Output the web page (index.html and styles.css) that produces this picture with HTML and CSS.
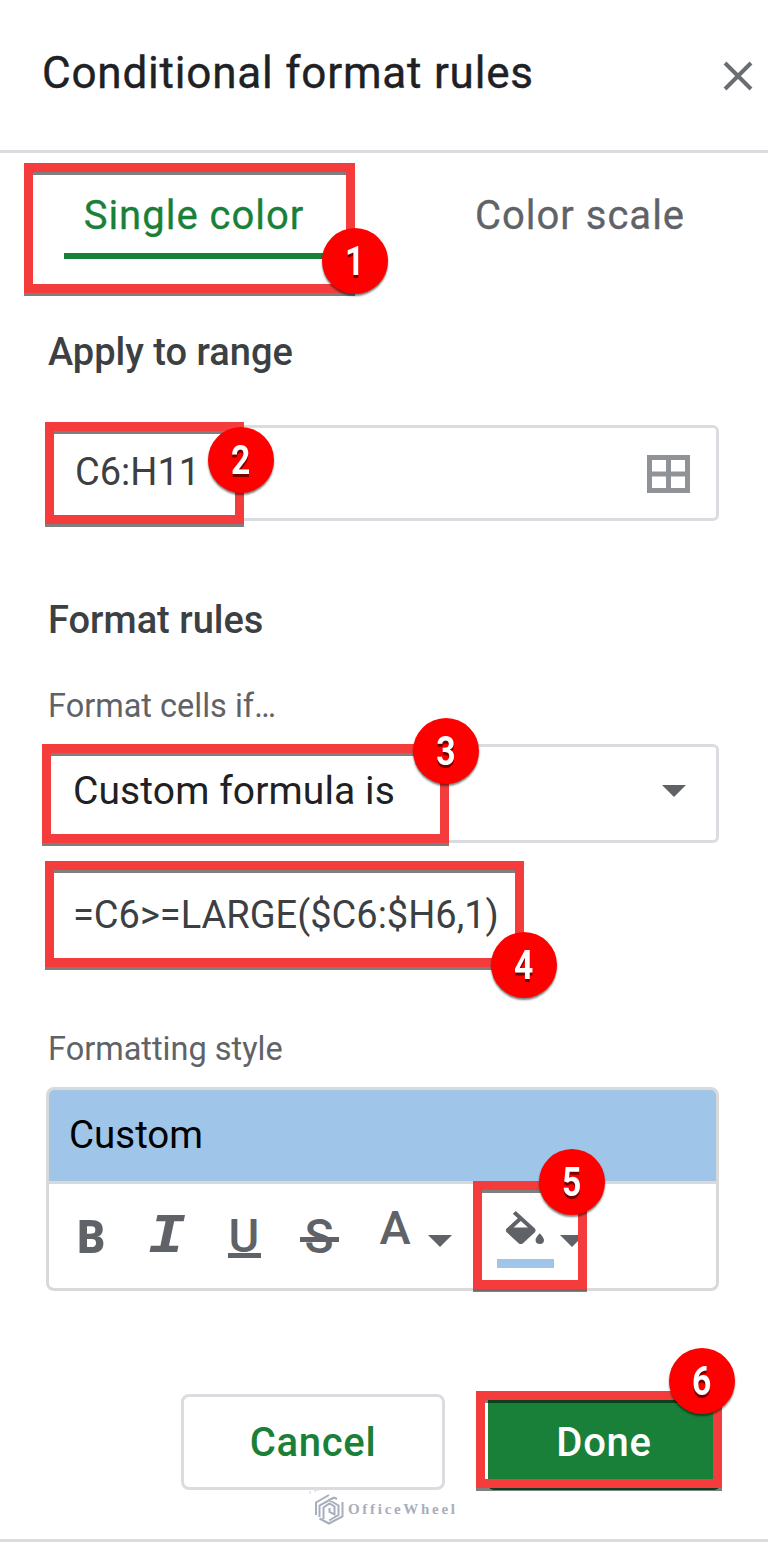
FILE: index.html
```html
<!DOCTYPE html>
<html lang="en">
<head>
    <meta charset="UTF-8">
    <meta name="viewport" content="width=device-width, initial-scale=1.0">
    <title>Conditional format rules</title>
    <link rel="stylesheet" href="styles.css">
</head>
<body>

<div class="header">
    <span class="title">Conditional format rules</span>
    <svg class="close" viewBox="0 0 30 30"><path d="M2 2L28 28M28 2L2 28" fill="none" stroke="#6a6e73" stroke-width="4"/></svg>
</div>

<div class="tabs">
    <div class="tab active"><span class="t-single">Single color</span></div>
    <div class="tab"><span class="t-scale">Color scale</span></div>
    <div class="mark mark-1"></div>
    <div class="badge badge-1"><span>1</span></div>
</div>

<div class="content">
    <div class="section-title apply">Apply to range</div>
    <div class="field range">
        <span class="t-range">C6:H11</span>
        <svg class="grid-icon" viewBox="0 0 43 38"><path d="M2.5 2.5h38v33h-38zM21.5 2v34M2 19h39" fill="none" stroke="#8f9397" stroke-width="5"/></svg>
        <div class="mark mark-2"></div>
        <div class="badge badge-2"><span>2</span></div>
    </div>

    <div class="section-title rules">Format rules</div>
    <div class="label cells-if">Format cells if…</div>
    <div class="field select">
        <span class="t-select">Custom formula is</span>
        <svg class="arrow" viewBox="0 0 24 12"><path d="M0 0h24L12 12z" fill="#5f6368"/></svg>
        <div class="mark mark-3"></div>
        <div class="badge badge-3"><span>3</span></div>
    </div>
    <div class="formula">
        <span class="t-formula">=C6&gt;=LARGE($C6:$H6,1)</span>
        <div class="mark mark-4"></div>
        <div class="badge badge-4"><span>4</span></div>
    </div>

    <div class="label style-label">Formatting style</div>
    <div class="style-box">
        <div class="preview"><span class="t-custom">Custom</span></div>
        <div class="toolbar">
            <div class="tool"><span class="bold">B</span></div>
            <div class="tool"><span class="italic">I</span></div>
            <div class="tool"><span class="underline">U</span></div>
            <div class="tool"><span class="strike">S</span></div>
            <div class="tool"><span class="color">A</span></div>
            <svg class="arrow small" viewBox="0 0 24 12"><path d="M0 0h24L12 12z" fill="#5f6368"/></svg>
            <div class="fill">
                <svg class="bucket" viewBox="3 0 18 17" preserveAspectRatio="none"><path d="M16.56 8.94L7.62 0 6.21 1.41l2.38 2.38-5.15 5.15a1.49 1.49 0 0 0 0 2.12l5.5 5.5c.29.29.68.44 1.06.44s.77-.15 1.06-.44l5.5-5.5c.59-.58.59-1.53 0-2.12zM6.600 8.500L10 5.21 13.400 8.500zM19 11.5s-2 2.17-2 3.5a2 2 0 0 0 4 0c0-1.33-2-3.5-2-3.5z" fill="#5f6368"/></svg>
                <div class="swatch"></div>
            </div>
            <svg class="arrow small" viewBox="0 0 24 12"><path d="M0 0h24L12 12z" fill="#5f6368"/></svg>
        </div>
        <div class="mark mark-5"></div>
        <div class="badge badge-5"><span>5</span></div>
    </div>
</div>

<div class="buttons">
    <button class="btn cancel"><span class="t-cancel">Cancel</span></button>
    <button class="btn done"><span class="t-done">Done</span></button>
    <div class="mark mark-6"></div>
    <div class="badge badge-6"><span>6</span></div>
</div>

<div class="brand">
    <svg class="brand-logo" viewBox="-5 -4 35 36"><path d="M2 22V9.500L15 2M5.500 24V12.500L20 4.500M9.500 26V14.500l6-4 5 3v8l-5-2.500v-4M20 4.500L23 6M16 7.500l8.500 5V22L15 27.500M28.500 9v14.500L15 30.500 5.500 25.500" fill="none" stroke="#a9aebc" stroke-width="2"/><path d="M-4-2v3M1-3h4M1-3v2" fill="none" stroke="#cdd1da" stroke-width="1"/></svg>
    <span class="t-brand">OfficeWheel</span>
</div>

</body>
</html>
```
FILE: styles.css
```css
* { box-sizing: border-box; }
body { margin: 0; width: 768px; height: 1542px; display: flex; flex-direction: column; background: #fff; border-bottom: 3px solid #dadce0; font-family: Roboto, sans-serif; color: #3c4043; line-height: 40px; white-space: nowrap; }
svg { display: block; flex: none; }

.header { height: 153px; flex: none; display: flex; align-items: center; justify-content: space-between; padding: 0 15px 4px 42px; border-bottom: 3px solid #dadce0; }
.title { font-size: 44px; letter-spacing: 0.8px; color: #202124; -webkit-text-stroke: 0.4px #202124; }
.close { width: 30px; height: 30px; margin-top: 6px; }

.tabs { position: relative; height: 106px; flex: none; display: flex; gap: 126px; padding-left: 64px; }
.tab { width: 260px; padding-top: 43px; text-align: center; font-size: 40px; color: #5f6368; }
.active { color: #188038; border-bottom: 6px solid #188038; border-top-left-radius: 3px; }
.t-single, .t-scale { letter-spacing: 1px; -webkit-text-stroke: 0.3px currentColor; }

.content { display: flex; flex-direction: column; padding: 73px 49px 0 46px; }
.section-title { padding-left: 2px; font-size: 38px; font-weight: 500; }
.label { padding-left: 2px; font-size: 32.5px; color: #5f6368; }
.field { position: relative; display: flex; align-items: center; justify-content: space-between; border: 3px solid #dadce0; border-radius: 6px; }
.range { height: 96px; margin-top: 53px; padding: 0 26px 3px 26px; font-size: 38px; }
.grid-icon { width: 43px; height: 38px; margin-top: 4px; }
.rules { margin-top: 79px; }
.cells-if { margin-top: 46px; }
.select { height: 99px; margin-top: 18px; padding: 0 30px 5px 24px; font-size: 39px; letter-spacing: 0.1px; color: #202124; }
.arrow { width: 24px; height: 12px; }
.formula { position: relative; height: 106px; margin-top: 18px; padding: 34px 0 0 27px; font-size: 38px; }
.style-label { margin-top: 62px; }
.style-box { position: relative; height: 204px; margin-top: 18px; border: 3px solid #d9d9d9; border-radius: 8px; }
.preview { height: 94px; display: flex; align-items: center; padding: 0 0 1px 20px; background: #9fc5e8; border-bottom: 3px solid #d9d9d9; border-radius: 5px 5px 0 0; font-size: 38.5px; color: #000; }

.toolbar { height: 104px; display: flex; padding-left: 4px; color: #5f6368; }
.tool { width: 76px; display: flex; justify-content: center; padding-top: 33px; font-size: 47px; }
.bold { font-weight: 900; transform: scaleX(0.92); }
.italic { font-family: "Liberation Mono", monospace; font-size: 55px; font-weight: bold; font-style: italic; transform: scaleX(1.12); margin-top: 1px; }
.underline { width: 33px; height: 42px; margin: -1px 0 0 2px; text-align: center; border-bottom: 5px solid #5f6368; font-weight: 500; }
.strike { height: 40px; font-size: 48px; font-weight: 500; background: linear-gradient(#5f6368, #5f6368) center 20px / 39px 5px no-repeat; padding: 0 6px; }
.color { margin-top: -9px; font-weight: 500; }
.small { margin: 51px 0 0 -5px; }
.fill { width: 57px; margin: 27px 11px 0 45px; }
.bucket { width: 38px; height: 33px; margin-left: 9px; }
.swatch { height: 9px; margin-top: 15px; background: #9fc5e8; }

.buttons { position: relative; display: flex; gap: 43px; margin-top: 103px; padding-left: 181px; }
.btn { height: 96px; padding: 0; font: 500 40px Roboto, sans-serif; letter-spacing: 0.7px; }
.cancel { width: 264px; border: 3px solid #dadce0; border-radius: 8px; background: #fff; color: #188038; }
.done { width: 232px; border: none; border-radius: 6px; background: #188038; color: #fff; }

.brand { display: flex; align-items: center; gap: 4px; margin-top: -1px; padding-left: 309px; line-height: 32px; }
.brand-logo { width: 35px; height: 36px; }
.t-brand { margin-top: 4px; font-family: "Liberation Serif", serif; font-size: 15px; font-weight: bold; letter-spacing: 2.7px; color: #a9aebc; }

/* numbered callouts */
.mark { position: absolute; border: 9px solid #f43c3c; filter: drop-shadow(0 3px 0 rgba(0,0,0,0.5)); }
.badge { position: absolute; width: 66px; height: 66px; border-radius: 50%; background: #f00; box-shadow: 0 2px 2px rgba(0,0,0,0.5); display: flex; align-items: center; justify-content: center; color: #fff; font-size: 41px; font-weight: bold; text-shadow: 0 3px 0 #700; }
.badge span { transform: scaleX(0.82); }
.mark-1 { left: 24px; top: 10px; width: 331px; height: 130px; }
.badge-1 { left: 322px; top: 75px; }
.mark-2 { left: -4px; top: -6px; width: 199px; height: 102px; }
.badge-2 { left: 159px; top: -1px; }
.mark-3 { left: -7px; top: -3px; width: 407px; height: 99px; }
.badge-3 { left: 364px; top: -29px; }
.mark-4 { left: -1px; top: 0; width: 479px; height: 106px; }
.badge-4 { left: 445px; top: 71px; }
.mark-5 { left: 424px; top: 91px; width: 114px; height: 108px; }
.badge-5 { left: 490px; top: 59px; }
.mark-6 { left: 476px; top: -3px; width: 246px; height: 97px; }
.badge-6 { left: 669px; top: -46px; }
```
